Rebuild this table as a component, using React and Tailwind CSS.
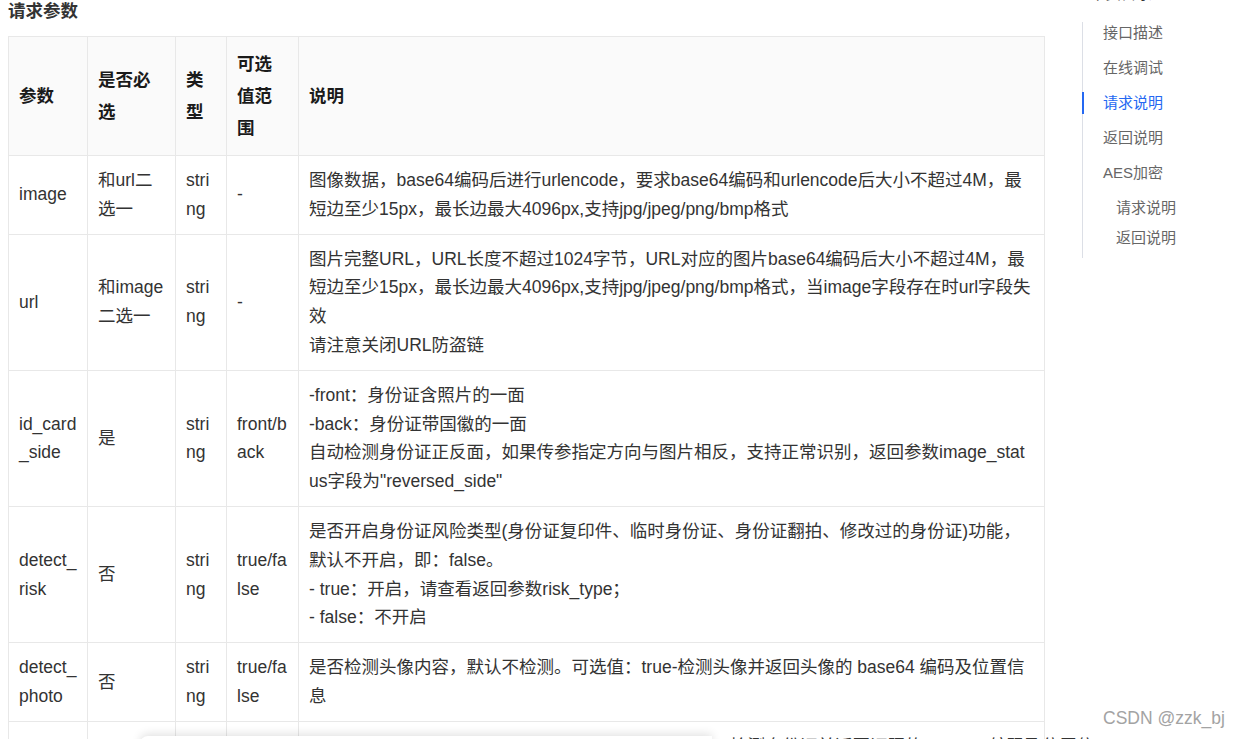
const params = [
  {
    name: ["image"],
    required: ["和url二", "选一"],
    type: ["stri", "ng"],
    range: ["-"],
    desc: [
      "图像数据，base64编码后进行urlencode，要求base64编码和urlencode后大小不超过4M，最",
      "短边至少15px，最长边最大4096px,支持jpg/jpeg/png/bmp格式",
    ],
  },
  {
    name: ["url"],
    required: ["和image", "二选一"],
    type: ["stri", "ng"],
    range: ["-"],
    desc: [
      "图片完整URL，URL长度不超过1024字节，URL对应的图片base64编码后大小不超过4M，最",
      "短边至少15px，最长边最大4096px,支持jpg/jpeg/png/bmp格式，当image字段存在时url字段失",
      "效",
      "请注意关闭URL防盗链",
    ],
  },
  {
    name: ["id_card", "_side"],
    required: ["是"],
    type: ["stri", "ng"],
    range: ["front/b", "ack"],
    desc: [
      "-front：身份证含照片的一面",
      "-back：身份证带国徽的一面",
      "自动检测身份证正反面，如果传参指定方向与图片相反，支持正常识别，返回参数image_stat",
      'us字段为"reversed_side"',
    ],
  },
  {
    name: ["detect_", "risk"],
    required: ["否"],
    type: ["stri", "ng"],
    range: ["true/fa", "lse"],
    desc: [
      "是否开启身份证风险类型(身份证复印件、临时身份证、身份证翻拍、修改过的身份证)功能，",
      "默认不开启，即：false。",
      "- true：开启，请查看返回参数risk_type；",
      "- false：不开启",
    ],
  },
  {
    name: ["detect_", "photo"],
    required: ["否"],
    type: ["stri", "ng"],
    range: ["true/fa", "lse"],
    desc: [
      "是否检测头像内容，默认不检测。可选值：true-检测头像并返回头像的 base64 编码及位置信",
      "息",
    ],
  },
  {
    name: ["detect_", "card"],
    required: ["否"],
    type: ["stri", "ng"],
    range: ["true/fa", "lse"],
    desc: [
      "是否检测身份证进行裁剪，默认不检测。可选值：true-检测身份证并返回证照的 base64 编码及位置信",
      "息",
      "\u00a0",
      "\u00a0",
    ],
  },
];

const toc = [
  { label: "接口描述" },
  { label: "在线调试" },
  { label: "请求说明", active: true },
  { label: "返回说明" },
  { label: "AES加密" },
];

function Lines({ lines }) {
  return lines.map((line, i) => (
    <div key={i} className="whitespace-nowrap">
      {line}
    </div>
  ));
}

function App() {
  return (
    <div className="relative w-[1243px] h-[739px] overflow-hidden bg-white flex font-['Liberation_Sans','Noto_Sans_CJK_SC',sans-serif]">
      {/* --- MAIN CONTENT --- */}
      <div className="w-[1082px] shrink-0 pl-2">
        <h3 className="h-[22px] leading-[22px] text-[17.5px] font-bold text-[#333]">请求参数</h3>

        <table className="mt-[14px] w-[1037px] table-fixed border-collapse text-[17.5px]">
          <colgroup>
            <col className="w-[79px]" />
            <col className="w-[88px]" />
            <col className="w-[51px]" />
            <col className="w-[72px]" />
            <col />
          </colgroup>
          <thead>
            <tr className="bg-[#fafafa] text-[#1a1a1a] font-bold leading-[32px]">
              <th className="border border-[#e8e8e8] px-[10px] py-[11px] text-left align-middle">
                <Lines lines={["参数"]} />
              </th>
              <th className="border border-[#e8e8e8] px-[10px] py-[11px] text-left align-middle">
                <Lines lines={["是否必", "选"]} />
              </th>
              <th className="border border-[#e8e8e8] px-[10px] py-[11px] text-left align-middle">
                <Lines lines={["类", "型"]} />
              </th>
              <th className="border border-[#e8e8e8] px-[10px] py-[11px] text-left align-middle">
                <Lines lines={["可选", "值范", "围"]} />
              </th>
              <th className="border border-[#e8e8e8] px-[10px] py-[11px] text-left align-middle">
                <Lines lines={["说明"]} />
              </th>
            </tr>
          </thead>
          <tbody className="text-[#333] leading-[28.8px]">
            {params.map((p, i) => (
              <tr key={i}>
                <td className="border border-[#e8e8e8] px-[10px] py-[10px] align-middle">
                  <Lines lines={p.name} />
                </td>
                <td className="border border-[#e8e8e8] px-[10px] py-[10px] align-middle">
                  <Lines lines={p.required} />
                </td>
                <td className="border border-[#e8e8e8] px-[10px] py-[10px] align-middle">
                  <Lines lines={p.type} />
                </td>
                <td className="border border-[#e8e8e8] px-[10px] py-[10px] align-middle">
                  <Lines lines={p.range} />
                </td>
                <td className="border border-[#e8e8e8] px-[10px] py-[10px] align-middle">
                  <Lines lines={p.desc} />
                </td>
              </tr>
            ))}
          </tbody>
        </table>
      </div>

      {/* --- TABLE OF CONTENTS --- */}
      <aside className="flex-1">
        <div className="-mt-[16px] h-[20px] pl-[8px] leading-[20px] text-[15.5px] text-[#333]">本页目录</div>
        <nav className="mt-[18px] flex w-[140px] flex-col gap-[13px] border-l border-[#dcdfe6] pb-[9px] text-[15px] text-[#666]">
          {toc.map((item) => (
            <div
              key={item.label}
              className={
                item.active
                  ? "-ml-px h-[22px] border-l-2 border-[#2468f2] pl-[19px] leading-[22px] text-[#2468f2]"
                  : "h-[22px] pl-[20px] leading-[22px]"
              }
            >
              {item.label}
            </div>
          ))}
          <div className="flex flex-col gap-[8px]">
            <div className="h-[22px] pl-[33px] leading-[22px]">请求说明</div>
            <div className="h-[22px] pl-[33px] leading-[22px]">返回说明</div>
          </div>
        </nav>
      </aside>

      {/* floating bar peeking in at the bottom */}
      <div className="absolute left-[140px] top-[736px] h-[40px] w-[572px] rounded-tl-lg bg-white shadow-[0_-2px_10px_rgba(0,0,0,0.12)]" />

      {/* watermark */}
      <div className="absolute left-[1103px] top-[706px] text-[17.5px] leading-[24px] text-[#a3a3a3]">CSDN @zzk_bj</div>
    </div>
  );
}

export default App;
